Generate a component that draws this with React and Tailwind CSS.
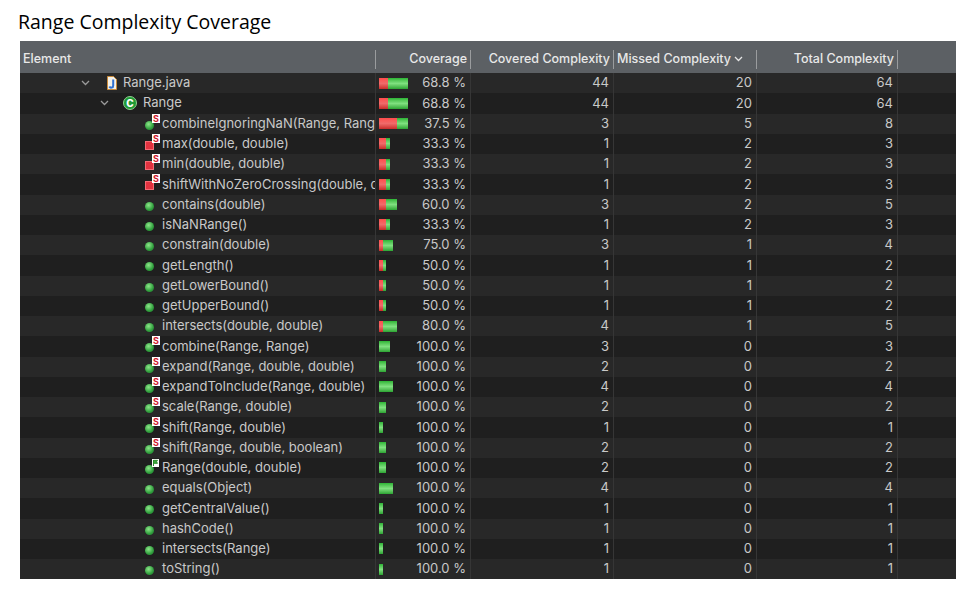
import React from "react";

const rows = [
  { name: "Range.java", kind: "file", pct: "68.8", cov: 44, miss: 20, total: 64 },
  { name: "Range", kind: "class", pct: "68.8", cov: 44, miss: 20, total: 64 },
  { name: "combineIgnoringNaN(Range, Range)", kind: "pub", s: true, pct: "37.5", cov: 3, miss: 5, total: 8 },
  { name: "max(double, double)", kind: "priv", s: true, pct: "33.3", cov: 1, miss: 2, total: 3 },
  { name: "min(double, double)", kind: "priv", s: true, pct: "33.3", cov: 1, miss: 2, total: 3 },
  { name: "shiftWithNoZeroCrossing(double, double)", kind: "priv", s: true, pct: "33.3", cov: 1, miss: 2, total: 3 },
  { name: "contains(double)", kind: "pub", pct: "60.0", cov: 3, miss: 2, total: 5 },
  { name: "isNaNRange()", kind: "pub", pct: "33.3", cov: 1, miss: 2, total: 3 },
  { name: "constrain(double)", kind: "pub", pct: "75.0", cov: 3, miss: 1, total: 4 },
  { name: "getLength()", kind: "pub", pct: "50.0", cov: 1, miss: 1, total: 2 },
  { name: "getLowerBound()", kind: "pub", pct: "50.0", cov: 1, miss: 1, total: 2 },
  { name: "getUpperBound()", kind: "pub", pct: "50.0", cov: 1, miss: 1, total: 2 },
  { name: "intersects(double, double)", kind: "pub", pct: "80.0", cov: 4, miss: 1, total: 5 },
  { name: "combine(Range, Range)", kind: "pub", s: true, pct: "100.0", cov: 3, miss: 0, total: 3 },
  { name: "expand(Range, double, double)", kind: "pub", s: true, pct: "100.0", cov: 2, miss: 0, total: 2 },
  { name: "expandToInclude(Range, double)", kind: "pub", s: true, pct: "100.0", cov: 4, miss: 0, total: 4 },
  { name: "scale(Range, double)", kind: "pub", s: true, pct: "100.0", cov: 2, miss: 0, total: 2 },
  { name: "shift(Range, double)", kind: "pub", s: true, pct: "100.0", cov: 1, miss: 0, total: 1 },
  { name: "shift(Range, double, boolean)", kind: "pub", s: true, pct: "100.0", cov: 2, miss: 0, total: 2 },
  { name: "Range(double, double)", kind: "pub", ctor: true, pct: "100.0", cov: 2, miss: 0, total: 2 },
  { name: "equals(Object)", kind: "pub", pct: "100.0", cov: 4, miss: 0, total: 4 },
  { name: "getCentralValue()", kind: "pub", pct: "100.0", cov: 1, miss: 0, total: 1 },
  { name: "hashCode()", kind: "pub", pct: "100.0", cov: 1, miss: 0, total: 1 },
  { name: "intersects(Range)", kind: "pub", pct: "100.0", cov: 1, miss: 0, total: 1 },
  { name: "toString()", kind: "pub", pct: "100.0", cov: 1, miss: 0, total: 1 },
];

const grid = "grid grid-cols-[356px_95px_143px_143px_141px_1fr]";

const Chevron = () => (
  <svg width="9" height="6" viewBox="0 0 9 6" className="shrink-0">
    <path d="M1 1l3.5 3.5L8 1" fill="none" stroke="#9a9a9a" strokeWidth="1.3" />
  </svg>
);

const FileIcon = () => (
  <svg width="10" height="14" viewBox="0 0 10 14" className="shrink-0">
    <path d="M0.5 0.5h6l3 3v10h-9z" fill="#f4f1e8" stroke="#c98a3a" />
    <path d="M6.2 3.5v6a2 2 0 0 1-3.8 1" fill="none" stroke="#2f6fd0" strokeWidth="2" />
  </svg>
);

const StaticBadge = () => (
  <span className="absolute right-0 top-[-10px] flex h-[9px] w-[8px] items-center justify-center bg-white text-[9px] font-bold leading-none text-[#d0202e]">
    S
  </span>
);

const CtorBadge = () => (
  <svg width="7" height="8" viewBox="0 0 7 8" className="absolute right-0 top-[-9px]">
    <rect x="0" y="0" width="7" height="8" fill="#fff" />
    <path d="M1.5 1v6M1.5 1.3h4l-1 1.5 1 1.5h-4" fill="#3caa3c" stroke="#2e8f2e" strokeWidth="1" />
  </svg>
);

const MethodIcon = ({ kind, s, ctor }) => (
  <span className="relative flex h-[20px] w-[17px] shrink-0 items-center">
    {kind === "priv" ? (
      <span className="mt-[3px] h-[9px] w-[9px] border border-[#f36a74] bg-[#e23340]" />
    ) : (
      <span className="mt-[3px] h-[9px] w-[9px] rounded-full bg-[radial-gradient(circle_at_40%_35%,#8ee68a,#2f9e3c_60%,#1f7a2c)]" />
    )}
    {s && (
      <span className="absolute left-[7px] top-[10px]">
        <span className="relative block w-[8px]">
          <StaticBadge />
        </span>
      </span>
    )}
    {ctor && (
      <span className="absolute left-[7px] top-[10px]">
        <span className="relative block w-[7px]">
          <CtorBadge />
        </span>
      </span>
    )}
  </span>
);

const Bar = ({ miss, total }) => {
  const w = Math.min(29, total * 3.6);
  const red = (miss / total) * w;
  return (
    <div className="flex h-[11px] shrink-0" style={{ width: w }}>
      <div className="h-full bg-linear-to-b from-[#ff4b4b] via-[#f06a6a] to-[#c92a2a]" style={{ width: red }} />
      <div className="h-full flex-1 bg-linear-to-b from-[#2ab534] via-[#7fe07f] to-[#2aa532]" />
    </div>
  );
};

const ElementCell = ({ r }) => {
  if (r.kind === "file")
    return (
      <div className="flex items-center pl-[61px]">
        <Chevron />
        <span className="ml-[17px]">
          <FileIcon />
        </span>
        <span className="ml-[6px]">{r.name}</span>
      </div>
    );
  if (r.kind === "class")
    return (
      <div className="flex items-center pl-[80px]">
        <Chevron />
        <span className="ml-[14px] flex h-[14px] w-[14px] items-center justify-center rounded-full border border-[#8fd08f] bg-[#1f9a35] text-[10px] font-extrabold leading-none text-white">
          C
        </span>
        <span className="ml-[6px]">{r.name}</span>
      </div>
    );
  return (
    <div className="flex items-center pl-[125px]">
      <MethodIcon kind={r.kind} s={r.s} ctor={r.ctor} />
      <span className="whitespace-nowrap">{r.name}</span>
    </div>
  );
};

const Head = ({ children, left }) => (
  <div className={`flex items-center ${left ? "justify-start pl-[3px]" : "justify-end pr-[3px]"} my-[9px] border-r border-[#9a9c9e]`}>
    <span>{children}</span>
  </div>
);

export default function App() {
  return (
    <div className="min-h-[593px] bg-white pt-[9px]" style={{ fontFamily: "Inter, 'Liberation Sans', sans-serif" }}>
      <h1 className="pl-[18px] text-[19.5px] leading-[26px] text-black" style={{ fontFamily: "'Open Sans', sans-serif" }}>
        Range Complexity Coverage
      </h1>
      <div className="ml-[20px] mt-[6px] w-[936px] bg-[#262626] text-[13px] text-[#c9c9c9]">
        <div className={`${grid} h-[32px] bg-[#5c6064] text-[12.5px] font-medium text-[#e8e8e8]`}>
          <Head left>Element</Head>
          <Head>Coverage</Head>
          <Head>Covered Complexity</Head>
          <div className="my-[9px] flex items-center border-r border-[#9a9c9e] pl-[3px]">
            <span>Missed Complexity</span>
            <svg width="9" height="6" viewBox="0 0 9 6" className="ml-[3px]">
              <path d="M1 1l3.5 3.5L8 1" fill="none" stroke="#e6e6e6" strokeWidth="1.3" />
            </svg>
          </div>
          <Head>Total Complexity</Head>
          <div />
        </div>
        {rows.map((r, i) => (
          <div key={i} className={`${grid} h-[20.25px] ${i % 2 === 0 ? "bg-[#282828]" : "bg-[#1f1f1f]"}`}>
            <div className="overflow-hidden border-r border-[#363636]">
              <ElementCell r={r} />
            </div>
            <div className="flex items-center border-r border-[#363636] pl-[3px] pr-[4px]">
              <Bar miss={r.miss} total={r.total} />
              <span className="ml-auto">{r.pct} %</span>
            </div>
            <div className="flex items-center justify-end border-r border-[#363636] pr-[4px]">{r.cov}</div>
            <div className="flex items-center justify-end border-r border-[#363636] pr-[4px]">{r.miss}</div>
            <div className="flex items-center justify-end border-r border-[#363636] pr-[4px]">{r.total}</div>
            <div />
          </div>
        ))}
      </div>
    </div>
  );
}
